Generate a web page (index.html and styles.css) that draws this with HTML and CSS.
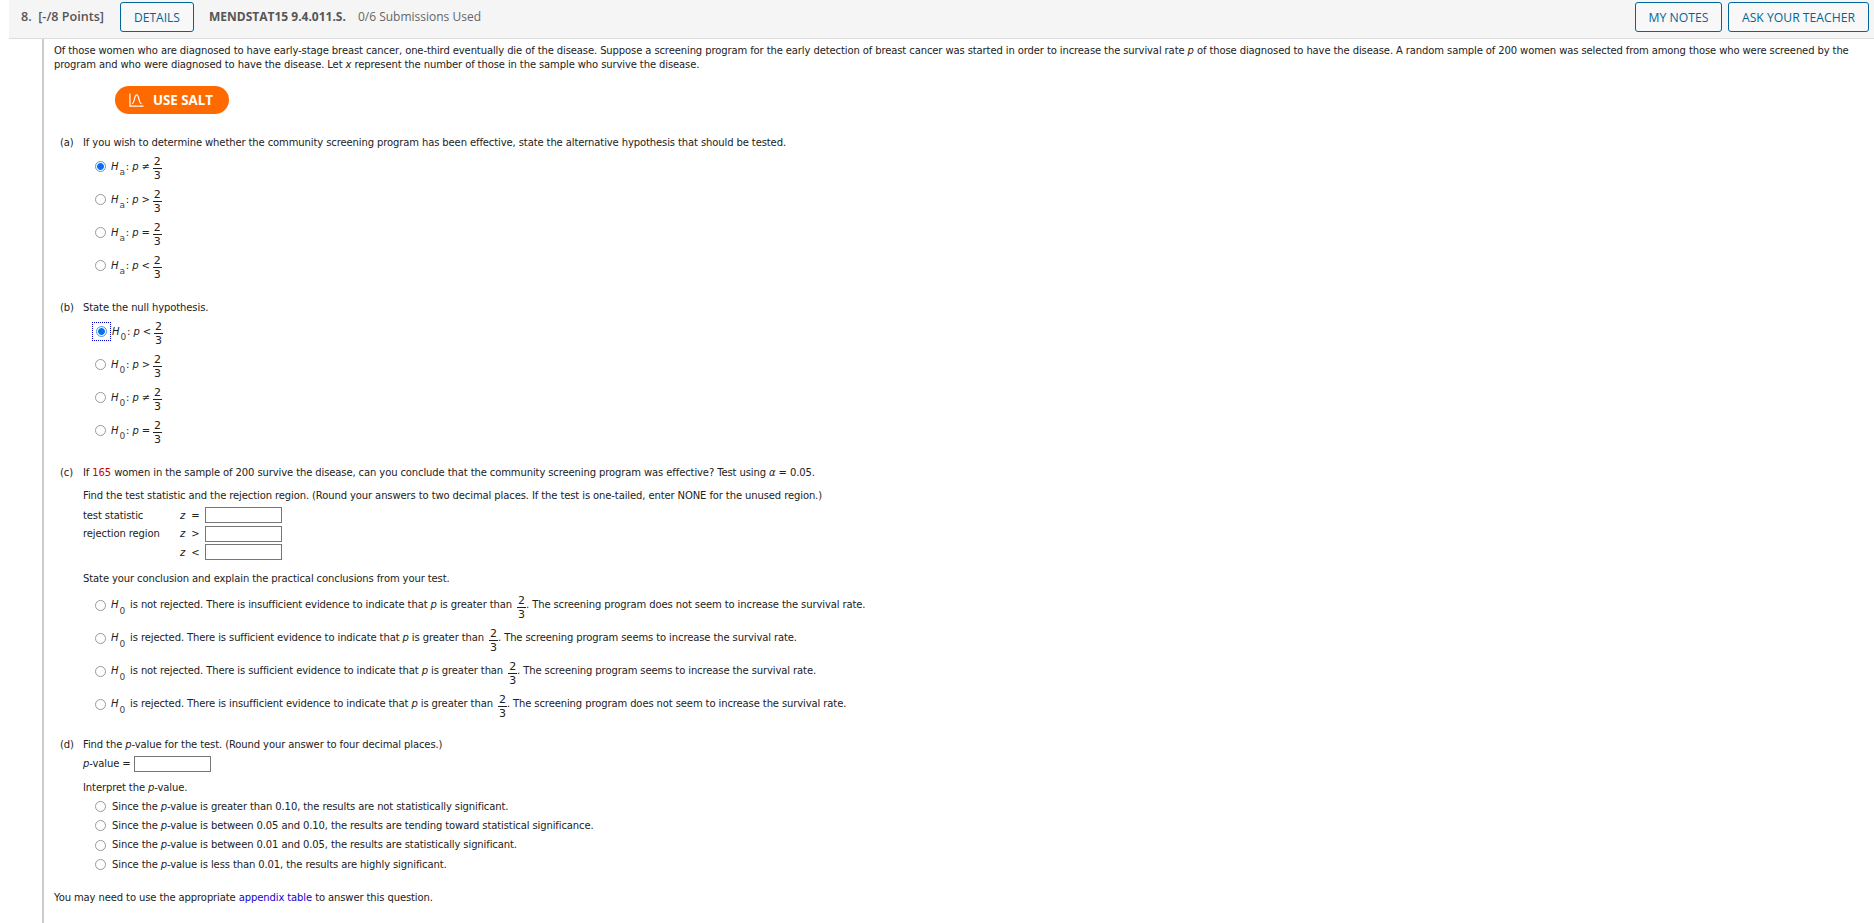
FILE: index.html
```html
<!DOCTYPE html>
<html lang="en">
<head>
    <meta charset="UTF-8">
    <title>Question 8</title>
    <link rel="stylesheet" href="styles.css">
</head>
<body>
    <div class="qhead">
        <span class="qnum">8.&nbsp; [-/8 Points]</span>
        <button class="hbtn details">DETAILS</button>
        <span class="qcode">MENDSTAT15 9.4.011.S.</span>
        <span class="qsubs">0/6 Submissions Used</span>
        <button class="hbtn notes">MY NOTES</button>
        <button class="hbtn ask">ASK YOUR TEACHER</button>
    </div>

    <div class="qbody">
        <p class="intro">Of those women who are diagnosed to have early-stage breast cancer, one-third eventually die of the disease. Suppose a screening program for the early detection of breast cancer was started in order to increase the survival rate <i>p</i> of those diagnosed to have the disease. A random sample of 200 women was selected from among those who were screened by the program and who were diagnosed to have the disease. Let <i>x</i> represent the number of those in the sample who survive the disease.</p>

        <button class="salt">
            <svg width="15" height="14" viewBox="0 0 16 15" fill="none" stroke="#fff" stroke-width="1.25">
                <path d="M1 0.5v13.5h14.5"/>
                <path d="M3 11.5c3.2 0 2.4-9.5 5.2-9.5s2 9.5 5.2 9.5"/>
            </svg>
            USE SALT
        </button>

        <!-- parte a -->
        <div class="part part-a"><span class="tag">(a)</span><span>If you wish to determine whether the community screening program has been effective, state the alternative hypothesis that should be tested.</span></div>
        <div class="opt"><input type="radio" name="a" checked><i>H</i><sub>a</sub><span class="rel">: <i>p</i> &ne;</span><span class="frac"><span>2</span><span>3</span></span></div>
        <div class="opt"><input type="radio" name="a"><i>H</i><sub>a</sub><span class="rel">: <i>p</i> &gt;</span><span class="frac"><span>2</span><span>3</span></span></div>
        <div class="opt"><input type="radio" name="a"><i>H</i><sub>a</sub><span class="rel">: <i>p</i> =</span><span class="frac"><span>2</span><span>3</span></span></div>
        <div class="opt"><input type="radio" name="a"><i>H</i><sub>a</sub><span class="rel">: <i>p</i> &lt;</span><span class="frac"><span>2</span><span>3</span></span></div>

        <!-- parte b -->
        <div class="part"><span class="tag">(b)</span><span>State the null hypothesis.</span></div>
        <div class="opt"><span class="focused"><input type="radio" name="b" checked></span><i>H</i><sub>0</sub><span class="rel">: <i>p</i> &lt;</span><span class="frac"><span>2</span><span>3</span></span></div>
        <div class="opt"><input type="radio" name="b"><i>H</i><sub>0</sub><span class="rel">: <i>p</i> &gt;</span><span class="frac"><span>2</span><span>3</span></span></div>
        <div class="opt"><input type="radio" name="b"><i>H</i><sub>0</sub><span class="rel">: <i>p</i> &ne;</span><span class="frac"><span>2</span><span>3</span></span></div>
        <div class="opt"><input type="radio" name="b"><i>H</i><sub>0</sub><span class="rel">: <i>p</i> =</span><span class="frac"><span>2</span><span>3</span></span></div>

        <!-- parte c -->
        <div class="part"><span class="tag">(c)</span><span>If <span class="red">165</span> women in the sample of 200 survive the disease, can you conclude that the community screening program was effective? Test using <i>&alpha;</i> = 0.05.</span></div>
        <div class="line find">Find the test statistic and the rejection region. (Round your answers to two decimal places. If the test is one-tailed, enter NONE for the unused region.)</div>
        <div class="stats">
            <span>test statistic</span><span><i>z</i> =</span><input type="text">
            <span>rejection region</span><span><i>z</i> &gt;</span><input type="text">
            <span></span><span><i>z</i> &lt;</span><input type="text">
        </div>
        <div class="line state">State your conclusion and explain the practical conclusions from your test.</div>
        <div class="opt"><input type="radio" name="c"><i>H</i><sub>0</sub><span class="txt">is not rejected. There is insufficient evidence to indicate that <i>p</i> is greater than</span><span class="frac"><span>2</span><span>3</span></span><span>. The screening program does not seem to increase the survival rate.</span></div>
        <div class="opt"><input type="radio" name="c"><i>H</i><sub>0</sub><span class="txt">is rejected. There is sufficient evidence to indicate that <i>p</i> is greater than</span><span class="frac"><span>2</span><span>3</span></span><span>. The screening program seems to increase the survival rate.</span></div>
        <div class="opt"><input type="radio" name="c"><i>H</i><sub>0</sub><span class="txt">is not rejected. There is sufficient evidence to indicate that <i>p</i> is greater than</span><span class="frac"><span>2</span><span>3</span></span><span>. The screening program seems to increase the survival rate.</span></div>
        <div class="opt"><input type="radio" name="c"><i>H</i><sub>0</sub><span class="txt">is rejected. There is insufficient evidence to indicate that <i>p</i> is greater than</span><span class="frac"><span>2</span><span>3</span></span><span>. The screening program does not seem to increase the survival rate.</span></div>

        <!-- parte d -->
        <div class="part part-d"><span class="tag">(d)</span><span>Find the <i>p</i>-value for the test. (Round your answer to four decimal places.)</span></div>
        <div class="line pval"><span><i>p</i>-value =</span><input type="text"></div>
        <div class="line interpret">Interpret the <i>p</i>-value.</div>
        <div class="opt small first"><input type="radio" name="d">Since the <i>p</i>-value is greater than 0.10, the results are not statistically significant.</div>
        <div class="opt small"><input type="radio" name="d">Since the <i>p</i>-value is between 0.05 and 0.10, the results are tending toward statistical significance.</div>
        <div class="opt small"><input type="radio" name="d">Since the <i>p</i>-value is between 0.01 and 0.05, the results are statistically significant.</div>
        <div class="opt small"><input type="radio" name="d">Since the <i>p</i>-value is less than 0.01, the results are highly significant.</div>

        <p class="foot">You may need to use the appropriate <a href="#">appendix table</a> to answer this question.</p>
    </div>
</body>
</html>
```

FILE: styles.css
```css
body {
    margin: 0;
    background: #fff;
    color: #222;
    font-family: "DejaVu Sans", Verdana, sans-serif;
    font-size: 10px;
    letter-spacing: -0.11px;
    line-height: 14px;
    overflow: hidden;
}

/* Cabecera */
.qhead {
    display: flex;
    align-items: center;
    height: 34px;
    margin-left: 9px;
    padding: 0 5px 4px 12px;
    background: #f5f5f5;
    border-bottom: 1px solid #ddd;
    font-family: "Open Sans", sans-serif;
    font-size: 12px;
    letter-spacing: 0;
    color: #555;
}
.qnum {
    font-size: 12.6px;
    font-weight: 600;
    width: 99px;
}
.hbtn {
    height: 30px;
    padding: 0;
    background: #f8f8f8;
    border: 1px solid #006699;
    border-radius: 3px;
    color: #006699;
    font-family: "Open Sans", sans-serif;
    font-size: 12.2px;
    font-weight: 500;
}
.details {
    width: 74px;
    font-size: 12px;
}
.notes {
    width: 87px;
    margin-left: auto;
    margin-right: 6px;
}
.ask {
    width: 141px;
}
.qcode {
    margin-left: 15px;
    font-weight: 700;
}
.qsubs {
    margin-left: 12px;
    color: #666;
}

/* Cuerpo */
.qbody {
    margin-left: 42px;
    padding: 5px 15px 0 10px;
    border-left: 2px solid #ccc;
    height: 880px;
}
.intro {
    margin: 0;
}
.salt {
    display: flex;
    align-items: center;
    gap: 9px;
    height: 28px;
    width: 114px;
    margin: 14px 0 0 61px;
    padding: 0 0 0 14px;
    background: #ff6a00;
    border: 0;
    border-radius: 14px;
    color: #fff;
    font-family: "Open Sans", sans-serif;
    font-size: 13.3px;
    font-weight: 700;
    letter-spacing: 0;
}
.part {
    display: flex;
    margin-top: 19px;
}
.part-a {
    margin-top: 22px;
}
.part-d {
    margin-top: 17.5px;
}
.tag {
    width: 23px;
    margin-left: 6px;
}
.line {
    margin-left: 29px;
}
.find {
    margin-top: 9px;
}
.state {
    margin-top: 12px;
    margin-bottom: 2.5px;
}
.interpret {
    margin-top: 8.5px;
}
.red {
    color: #cc0000;
}

/* Opciones */
.opt {
    display: flex;
    align-items: center;
    height: 33px;
    margin-left: 41px;
    white-space: pre;
}
.opt input {
    appearance: none;
    box-sizing: border-box;
    width: 11px;
    height: 11px;
    margin: 0 5px 0 0;
    border: 1px solid #999;
    border-radius: 50%;
    background: #fff;
}
.opt input:checked {
    border-color: #4d94e8;
    background: radial-gradient(circle, #0a6ef0 3px, #fff 3.8px);
}
.opt sub {
    font-size: 9px;
    line-height: 9px;
    margin: 12px 0 0 1px;
    color: #444;
}
.rel {
    margin-left: 1px;
}
.frac {
    display: flex;
    flex-direction: column;
    align-items: center;
    width: 9px;
    margin: 4px 0 0 5px;
    font-size: 11px;
}
.rel + .frac {
    margin-left: 3px;
}
.frac span {
    line-height: 13px;
    height: 13px;
}
.frac span:first-child {
    border-bottom: 1px solid #222;
    width: 100%;
    text-align: center;
}
.focused {
    display: flex;
    align-items: center;
    justify-content: center;
    width: 17px;
    height: 17px;
    margin: 0 1px 0 -3px;
    border: 1px dotted #0000cc;
}
.focused input {
    margin: 0;
}
.txt {
    margin-left: 5px;
}
.small {
    height: 19.33px;
}
.small input {
    margin-right: 6px;
}
.first {
    margin-top: 2px;
}

/* Campos */
.stats {
    display: grid;
    grid-template-columns: 97px 25px 77px;
    grid-auto-rows: 16px;
    row-gap: 2.5px;
    align-items: center;
    margin: 4px 0 0 29px;
}
.stats span {
    padding-top: 1px;
}
.stats i {
    margin-right: 3px;
}
.stats input,
.pval input {
    box-sizing: border-box;
    width: 77px;
    height: 16px;
    margin: 0;
    padding: 0;
    border: 1px solid #767676;
    background: #fff;
}
.pval {
    display: flex;
    align-items: center;
    gap: 3px;
    height: 18px;
    margin-top: 2.5px;
}
.foot {
    margin: 17px 0 0;
}
a {
    color: #2200cc;
    text-decoration: none;
}
```
